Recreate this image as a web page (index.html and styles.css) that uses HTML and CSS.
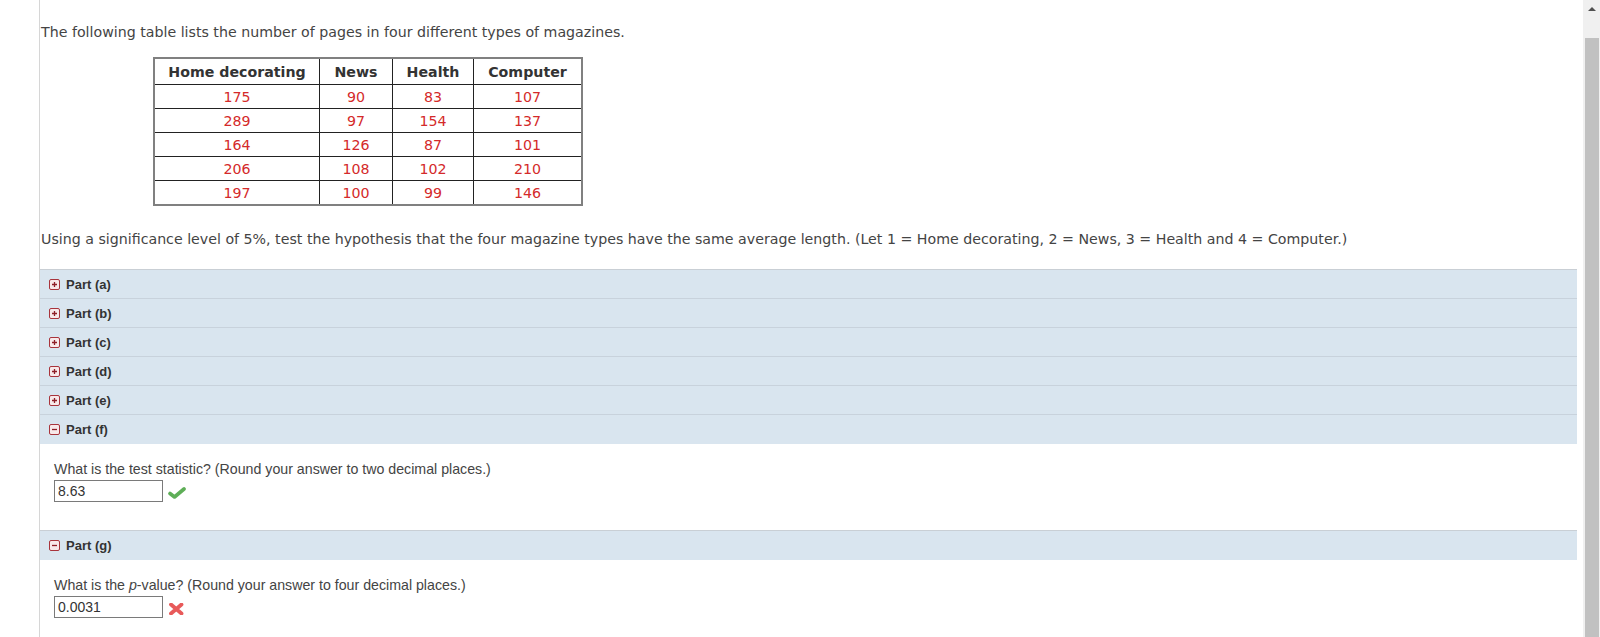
FILE: index.html
```html
<!DOCTYPE html>
<html lang="en">
<head>
    <meta charset="UTF-8">
    <title>Magazine pages - ANOVA</title>
    <link rel="stylesheet" href="styles.css">
</head>
<body>

    <div class="page">
        <p class="intro">The following table lists the number of pages in four different types of magazines.</p>

        <table class="data">
            <thead>
                <tr>
                    <th>Home decorating</th>
                    <th>News</th>
                    <th>Health</th>
                    <th>Computer</th>
                </tr>
            </thead>
            <tbody>
                <tr><td>175</td><td>90</td><td>83</td><td>107</td></tr>
                <tr><td>289</td><td>97</td><td>154</td><td>137</td></tr>
                <tr><td>164</td><td>126</td><td>87</td><td>101</td></tr>
                <tr><td>206</td><td>108</td><td>102</td><td>210</td></tr>
                <tr><td>197</td><td>100</td><td>99</td><td>146</td></tr>
            </tbody>
        </table>

        <p class="prompt">Using a significance level of 5%, test the hypothesis that the four magazine types have the same average length. (Let 1 = Home decorating, 2 = News, 3 = Health and 4 = Computer.)</p>

        <div class="parts">
            <div class="part">
                <div class="part-head"><svg class="toggle" viewBox="0 0 11 11"><rect x="0.5" y="0.5" width="10" height="10" rx="1.5"/><path d="M3 5.5h5M5.5 3v5"/></svg>Part (a)</div>
            </div>
            <div class="part">
                <div class="part-head"><svg class="toggle" viewBox="0 0 11 11"><rect x="0.5" y="0.5" width="10" height="10" rx="1.5"/><path d="M3 5.5h5M5.5 3v5"/></svg>Part (b)</div>
            </div>
            <div class="part">
                <div class="part-head"><svg class="toggle" viewBox="0 0 11 11"><rect x="0.5" y="0.5" width="10" height="10" rx="1.5"/><path d="M3 5.5h5M5.5 3v5"/></svg>Part (c)</div>
            </div>
            <div class="part">
                <div class="part-head"><svg class="toggle" viewBox="0 0 11 11"><rect x="0.5" y="0.5" width="10" height="10" rx="1.5"/><path d="M3 5.5h5M5.5 3v5"/></svg>Part (d)</div>
            </div>
            <div class="part">
                <div class="part-head"><svg class="toggle" viewBox="0 0 11 11"><rect x="0.5" y="0.5" width="10" height="10" rx="1.5"/><path d="M3 5.5h5M5.5 3v5"/></svg>Part (e)</div>
            </div>
            <div class="part open">
                <div class="part-head"><svg class="toggle" viewBox="0 0 11 11"><rect x="0.5" y="0.5" width="10" height="10" rx="1.5"/><path d="M3 5.5h5"/></svg>Part (f)</div>
                <div class="part-body">
                    <p class="question">What is the test statistic? (Round your answer to two decimal places.)</p>
                    <div class="answer">
                        <span class="field">8.63</span>
                        <svg class="mark" width="18" height="12" viewBox="0 0 18 12">
                            <path class="check" d="M2 6.5 L6.5 10 L16 2"/>
                        </svg>
                    </div>
                </div>
            </div>
            <div class="part open">
                <div class="part-head"><svg class="toggle" viewBox="0 0 11 11"><rect x="0.5" y="0.5" width="10" height="10" rx="1.5"/><path d="M3 5.5h5"/></svg>Part (g)</div>
                <div class="part-body">
                    <p class="question">What is the <i>p</i>-value? (Round your answer to four decimal places.)</p>
                    <div class="answer">
                        <span class="field">0.0031</span>
                        <svg class="mark" width="18" height="12" viewBox="0 0 18 12">
                            <path class="cross" d="M3 1.5 L13.5 10.5 M13.5 1.5 L3 10.5"/>
                        </svg>
                    </div>
                </div>
            </div>
        </div>
    </div>

    <!-- barra de rolagem desenhada -->
    <div class="scrollbar">
        <div class="scroll-up"></div>
        <div class="scroll-thumb"></div>
    </div>

</body>
</html>
```

FILE: styles.css
```css
body {
    margin: 0;
    background-color: #ffffff;
    color: #444;
    font-family: "DejaVu Sans", Verdana, sans-serif;
    font-size: 14.2px;
    overflow: hidden;
}

.page {
    margin-left: 39px;
    margin-right: 23px;
    min-height: 100vh;
    border-left: 1px solid #d6d6d6;
    padding-top: 24px;
}

.intro {
    margin: 0 0 0 1px;
    line-height: 17px;
}

.data {
    margin: 16px 0 0 113px;
    border-collapse: collapse;
    border: 2px solid #808080;
    text-align: center;
}
.data th, .data td {
    border: 1px solid #222;
    padding: 0 12px;
}
.data th {
    height: 25px;
    color: #333;
    font-weight: bold;
}
.data td {
    height: 23px;
    color: #d42a2a;
}
.data th:nth-child(1) { width: 140px; }
.data th:nth-child(2) { width: 48px; }
.data th:nth-child(3) { width: 56px; }
.data th:nth-child(4) { width: 83px; }

.prompt {
    margin: 25px 0 0 1px;
    line-height: 17px;
}

.parts {
    margin-top: 21px;
    border-top: 1px solid #c9cfd5;
    font-family: "Liberation Sans", Arial, sans-serif;
}

.part-head {
    display: flex;
    align-items: center;
    gap: 6px;
    height: 28px;
    padding-left: 9px;
    background-color: #d9e5ef;
    border-bottom: 1px solid #c8d2dc;
    color: #333;
    font-size: 13px;
    font-weight: bold;
}
.part.open .part-head {
    border-bottom: none;
    height: 29px;
}

.toggle {
    width: 11px;
    height: 11px;
}
.toggle rect {
    fill: #f8e9ea;
    stroke: #a8343c;
}
.toggle path {
    stroke: #8f1f28;
    stroke-width: 1.3;
}

.part-body {
    padding: 17px 0 28px 14px;
    border-bottom: 1px solid #c9cfd5;
}

.question {
    margin: 0;
    font-size: 14.2px;
    line-height: 16px;
    color: #444;
}

.answer {
    display: flex;
    align-items: center;
    gap: 5px;
    margin-top: 3px;
}

.field {
    box-sizing: border-box;
    width: 109px;
    height: 22px;
    padding: 2px 3px;
    border: 1px solid #7a7a7a;
    font-size: 14px;
    line-height: 16px;
    color: #333;
}

.mark {
    margin-top: 3px;
}
.check {
    fill: none;
    stroke: #5eae57;
    stroke-width: 3.6;
    stroke-linecap: round;
    stroke-linejoin: round;
}
.cross {
    fill: none;
    stroke: #e85a5a;
    stroke-width: 3.8;
    stroke-linecap: round;
}

.scrollbar {
    position: fixed;
    top: 0;
    right: 0;
    bottom: 0;
    width: 17px;
    background-color: #f0f0f0;
}
.scroll-up {
    height: 17px;
    position: relative;
}
.scroll-up::after {
    content: "";
    position: absolute;
    left: 5px;
    top: 7px;
    border-left: 4px solid transparent;
    border-right: 4px solid transparent;
    border-bottom: 4px solid #505050;
}
.scroll-thumb {
    position: absolute;
    top: 38px;
    bottom: 0;
    left: 2px;
    right: 1px;
    background-color: #c1c1c1;
}
```
